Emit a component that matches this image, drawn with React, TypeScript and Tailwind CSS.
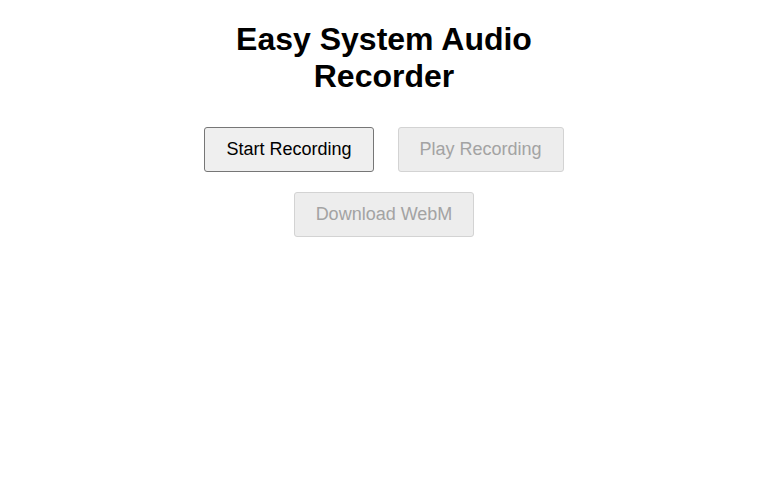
import { useState } from 'react';

// Кнопка в стиле стандартной кнопки браузера
function RecorderButton({
  label,
  disabled,
  onClick,
}: {
  label: string;
  disabled?: boolean;
  onClick?: () => void;
}) {
  const base =
    'h-[45px] px-[21px] rounded-[3px] border text-[18px] leading-[21px] m-[10px] mx-[12px]';
  const look = disabled
    ? 'bg-[#ededed] border-[#d3d3d3] text-[#a3a3a3]'
    : 'bg-[#efefef] border-[#767676] text-black';
  return (
    <button className={`${base} ${look}`} disabled={disabled} onClick={onClick}>
      {label}
    </button>
  );
}

export default function App() {
  const [recording, setRecording] = useState(false);
  const [hasAudio, setHasAudio] = useState(false);

  const toggle = () => {
    if (recording) setHasAudio(true);
    setRecording(!recording);
  };

  return (
    <div
      className="min-h-[480px] bg-white flex flex-col items-center text-black"
      style={{ fontFamily: '"Liberation Sans", Arial, sans-serif' }}
    >
      <h1 className="w-[340px] mt-[21px] text-center text-[32px] leading-[37px] font-bold">
        Easy System Audio Recorder
      </h1>
      <div className="mt-[22px] flex flex-wrap justify-center w-[400px]">
        <RecorderButton
          label={recording ? 'Stop Recording' : 'Start Recording'}
          onClick={toggle}
        />
        <RecorderButton label="Play Recording" disabled={!hasAudio} />
        <RecorderButton label="Download WebM" disabled={!hasAudio} />
      </div>
    </div>
  );
}
